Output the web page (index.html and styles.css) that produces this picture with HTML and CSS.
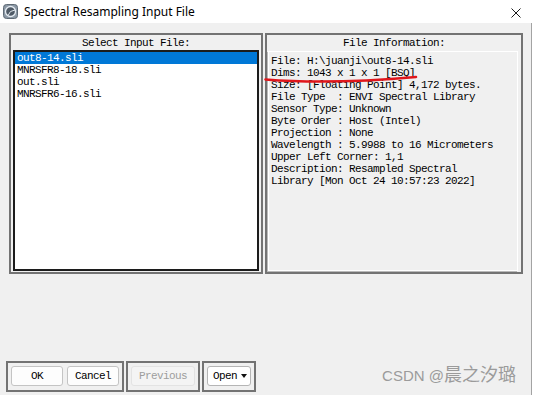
FILE: index.html
```html
<!DOCTYPE html>
<html>
<head>
<meta charset="utf-8">
<link rel="stylesheet" href="styles.css">
</head>
<body>
<div class="window">
  <div class="titlebar">
    <svg class="app-icon" width="15" height="15" viewBox="0 0 15 15">
      <rect x="0.5" y="0.5" width="14" height="14" rx="3" fill="#8a97a4" stroke="#5f6a75"/>
      <circle cx="7.5" cy="7.5" r="5" fill="#4f5a66" stroke="#e6ecf2" stroke-width="1.3"/>
      <path d="M7.5 7.5 L12 6 M7.5 7.5 L5 11.5" stroke="#dfe6ec" stroke-width="1"/>
    </svg>
    <span class="title">Spectral Resampling Input File</span>
    <svg class="close" width="10" height="10" viewBox="0 0 10 10">
      <path d="M0.5 0.5 L9.5 9.5 M9.5 0.5 L0.5 9.5" stroke="#1a1a1a" stroke-width="1"/>
    </svg>
  </div>
  <div class="content">
    <div class="panels">
      <section class="frame frame-list">
        <div class="frame-head">Select Input File:</div>
        <ul class="listbox">
          <li class="selected">out8-14.sli</li>
          <li>MNRSFR8-18.sli</li>
          <li>out.sli</li>
          <li>MNRSFR6-16.sli</li>
        </ul>
      </section>
      <section class="frame frame-info">
        <div class="frame-head">File Information:</div>
        <div class="infobox">
          <div class="line">File: H:\juanji\out8-14.sli</div>
          <div class="line">Dims: 1043 x 1 x 1 [BSQ]</div>
          <div class="line">Size: [Floating Point] 4,172 bytes.</div>
          <div class="line">File Type  : ENVI Spectral Library</div>
          <div class="line">Sensor Type: Unknown</div>
          <div class="line">Byte Order : Host (Intel)</div>
          <div class="line">Projection : None</div>
          <div class="line">Wavelength : 5.9988 to 16 Micrometers</div>
          <div class="line">Upper Left Corner: 1,1</div>
          <div class="line">Description: Resampled Spectral</div>
          <div class="line">Library [Mon Oct 24 10:57:23 2022]</div>
        </div>
      </section>
    </div>
    <div class="buttonbar">
      <div class="group">
        <button class="btn">OK</button>
        <button class="btn">Cancel</button>
      </div>
      <div class="group">
        <button class="btn btn-prev" disabled>Previous</button>
      </div>
      <div class="group">
        <button class="btn btn-menu">Open<span class="caret"></span></button>
      </div>
    </div>
    <div class="watermark">CSDN @<span class="wm-cjk">晨之汐璐</span></div>
    <svg class="annotation" width="156" height="10" viewBox="0 0 156 10">
      <path d="M1.5 4.5 C 40 7.5, 90 7.5, 152 2" fill="none" stroke="#e0161b" stroke-width="2.6" stroke-linecap="round"/>
    </svg>
  </div>
</div>
</body>
</html>
```

FILE: styles.css
```css
* { box-sizing: border-box; }
html, body {
  margin: 0;
  padding: 0;
  background: #ffffff;
}
.window {
  width: 533px;
  height: 395px;
  display: flex;
  flex-direction: column;
  overflow: hidden;
}
.titlebar {
  height: 23px;
  background: #ffffff;
  display: flex;
  align-items: center;
  padding-left: 3px;
}
.app-icon {
  display: block;
}
.title {
  margin-left: 6px;
  font-family: "Noto Sans", sans-serif;
  font-size: 12px;
  color: #000;
}
.close {
  margin-left: auto;
  margin-right: 12px;
  margin-top: 3px;
  display: block;
}
.content {
  position: relative;
  flex: 1;
  background: #f0f0f0;
  width: 532px;
  border-right: 1px solid #a3a3a3;
  display: flex;
  flex-direction: column;
  font-family: "Liberation Mono", monospace;
  font-size: 11px;
  letter-spacing: -0.6px;
  color: #000;
}
.panels {
  display: flex;
  gap: 2px;
  padding: 10px 0 0 9px;
}
.frame {
  border: 2px solid #737373;
  height: 241px;
  display: flex;
  flex-direction: column;
}
.frame-list { width: 254px; }
.frame-info { width: 258px; }
.frame-head {
  height: 15px;
  line-height: 16px;
  text-align: center;
  white-space: pre;
}
.listbox {
  list-style: none;
  margin: 0 2px 1px 2px;
  padding: 0;
  flex: 1;
  background: #ffffff;
  border: 2px solid #1c1c1c;
}
.listbox li {
  height: 12px;
  line-height: 12px;
  padding-left: 2px;
  white-space: pre;
}
.listbox li.selected {
  background: #0078d7;
  color: #ffffff;
}
.infobox {
  flex: 1;
  margin: 1px 3px 1px 1px;
  border: 1px solid #ffffff;
  box-shadow: -1px 1px 0 #b9b9b9;
  padding: 3px 2px 2px 2px;
}
.line {
  height: 12px;
  line-height: 12px;
  white-space: pre;
}
.buttonbar {
  display: flex;
  gap: 2px;
  margin-top: 87px;
  padding-left: 6px;
}
.group {
  border: 2px solid #737373;
  height: 31px;
  padding: 3px 3px 4px 3px;
  display: flex;
  gap: 4px;
}
.btn {
  height: 20px;
  width: 52px;
  padding: 0;
  margin: 0;
  font-family: "Liberation Mono", monospace;
  font-size: 11px;
  letter-spacing: -0.6px;
  color: #000;
  background: #fdfdfd;
  border: 1px solid #c4c4c4;
  border-radius: 3px;
  display: flex;
  align-items: center;
  justify-content: center;
}
.btn-prev {
  width: 64px;
  color: #9d9d9d;
  background: #f4f4f4;
  border-color: #e3e3e3;
}
.btn-menu {
  width: 44px;
  background: #ffffff;
  border-color: #b5b5b5;
  justify-content: flex-start;
  padding-left: 5px;
}
.caret {
  width: 0;
  height: 0;
  margin-left: 4px;
  border-left: 3.5px solid transparent;
  border-right: 3.5px solid transparent;
  border-top: 4px solid #111;
}
.watermark {
  position: absolute;
  right: 15px;
  bottom: 9px;
  font-family: "Liberation Sans", "Noto Sans CJK SC", sans-serif;
  font-size: 15px;
  line-height: 20px;
  letter-spacing: 0;
  color: #9b9b9b;
}
.wm-cjk {
  font-family: "Noto Sans CJK SC", sans-serif;
  font-size: 18px;
}
.annotation {
  position: absolute;
  left: 264px;
  top: 52px;
}
```
